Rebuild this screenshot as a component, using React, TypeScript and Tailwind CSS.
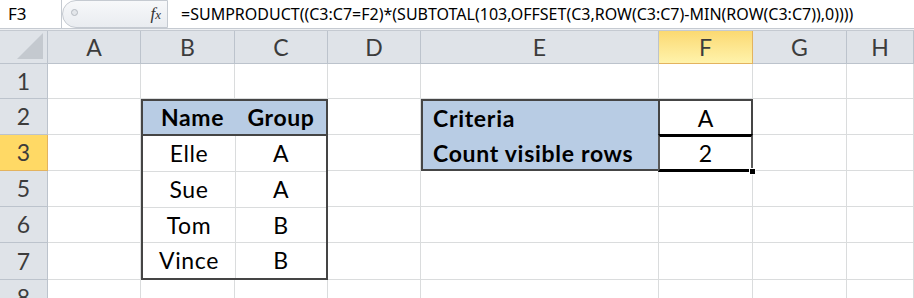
import React from 'react'

const cols = ['A', 'B', 'C', 'D', 'E', 'F', 'G', 'H']

const cellFont = { fontFamily: 'Lato, "Open Sans", sans-serif' }

function ColHeader({ label }: { label: string }) {
  const active = label === 'F'
  return (
    <div
      className={
        active
          ? 'flex items-center justify-center border-r border-b border-[#e3b35f] bg-gradient-to-b from-[#fbd971] to-[#fff3ab] text-[23px] text-[#3c3c3c]'
          : 'flex items-center justify-center border-r border-b border-[#bcc3cc] bg-[#dfe3e8] text-[23px] text-[#3c3c3c]'
      }
    >
      {label}
    </div>
  )
}

function RowHeader({ n }: { n: number }) {
  const active = n === 3
  return (
    <div
      className={
        active
          ? 'flex items-center justify-center border-r border-b border-[#e3b35f] bg-[#ffd965] text-[23px] text-[#3c3c3c]'
          : 'flex items-center justify-center border-r border-b border-[#bcc3cc] bg-[#dfe3e8] text-[23px] text-[#3c3c3c]'
      }
    >
      {n}
    </div>
  )
}

function Empty() {
  return <div className="border-r border-b border-[#dadcdd] bg-white" />
}

const people = [
  ['Elle', 'A'],
  ['Sue', 'A'],
  ['Tom', 'B'],
  ['Vince', 'B'],
]

function NameTable() {
  return (
    <div className="col-start-3 col-span-2 row-start-3 row-span-5 flex flex-col border-2 border-[#454545] text-[23px] tracking-[0.6px] text-black">
      <div className="flex h-[35px] border-b-2 border-[#454545] bg-[#b8cce4] font-bold">
        <div className="flex w-[93px] items-center justify-center pl-[6px]">Name</div>
        <div className="flex flex-1 items-center justify-center">Group</div>
      </div>
      {people.map(([name, group], i) => (
        <div
          key={name}
          className={i < 3 ? 'flex flex-1 border-b border-[#dadcdd]' : 'flex flex-1'}
        >
          <div className="flex w-[93px] items-center justify-center border-r border-[#dadcdd]">{name}</div>
          <div className="flex flex-1 items-center justify-center">{group}</div>
        </div>
      ))}
    </div>
  )
}

function CriteriaTable() {
  return (
    <div className="col-start-6 col-span-2 row-start-3 row-span-2 flex border-2 border-[#454545] text-[23px] text-black">
      <div className="flex w-[237px] flex-col justify-around border-r-2 border-[#454545] bg-[#b8cce4] pl-[10px] font-bold tracking-[0.7px]">
        <div>Criteria</div>
        <div>Count visible rows</div>
      </div>
      <div className="flex flex-1 flex-col">
        <div className="flex flex-1 items-center justify-center">A</div>
        <div className="relative flex flex-1 items-center justify-center">
          2
          <span className="absolute -top-[2px] -left-[2px] -right-[2px] -bottom-[2px] border-x-2 border-y-[3px] border-x-[#5a5a5a] border-y-black" />
          <span className="absolute -right-[5px] -bottom-[5px] h-[7px] w-[7px] border border-white bg-black" />
        </div>
      </div>
    </div>
  )
}

export default function App() {
  const rows = [1, 2, 3, 5, 6, 7, 8]
  return (
    <div className="h-[298px] w-[914px] overflow-hidden bg-white" style={cellFont}>
      <div
        className="flex h-[29px] items-center border-b border-[#c5cad1] text-[17px] text-black"
        style={{ fontFamily: '"Noto Sans", "Open Sans", sans-serif' }}
      >
        <div className="flex h-full w-[62px] items-center border-r border-[#c5cad1] pl-[8px]">F3</div>
        <div className="relative flex h-full w-[106px] items-center justify-end rounded-l-[14px] border border-[#c5cad1] bg-gradient-to-b from-[#f7f8fa] to-[#e9ecf0] pr-[6px]">
          <span className="absolute left-[8px] top-[8px] h-[7px] w-[7px] rounded-full border border-[#b5bac1] bg-[#e3e6ea]" />
          <span
            className="text-[17px] italic text-[#333]"
            style={{ fontFamily: '"Liberation Serif", serif' }}
          >
            f<span className="text-[13px]">x</span>
          </span>
        </div>
        <div className="pl-[13px] text-[16px] whitespace-nowrap">
          =SUMPRODUCT((C3:C7=F2)*(SUBTOTAL(103,OFFSET(C3,ROW(C3:C7)-MIN(ROW(C3:C7)),0))))
        </div>
      </div>
      <div className="h-[2px] border-b border-[#c5cad1] bg-[#eef0f3]" />
      <div className="grid grid-cols-[48px_93px_94px_93px_93px_238px_94px_94px_1fr] grid-rows-[33px_35px_36px_36px_36px_36px_37px_36px]">
        <div className="relative border-r border-b border-[#bcc3cc] bg-[#dfe3e8]">
          <span className="absolute right-[4px] bottom-[4px] h-0 w-0 border-b-[26px] border-l-[26px] border-b-[#c4c9cf] border-l-transparent" />
        </div>
        {cols.map((c) => (
          <ColHeader key={c} label={c} />
        ))}
        <NameTable />
        <CriteriaTable />
        {rows.map((r) => {
          const cells: React.ReactNode[] = [<RowHeader key={'h' + r} n={r} />]
          cols.forEach((c) => {
            const inName = (c === 'B' || c === 'C') && r >= 2 && r <= 7
            const inCrit = (c === 'E' || c === 'F') && r >= 2 && r <= 3
            if (!inName && !inCrit) cells.push(<Empty key={c + r} />)
          })
          return cells
        })}
      </div>
    </div>
  )
}
